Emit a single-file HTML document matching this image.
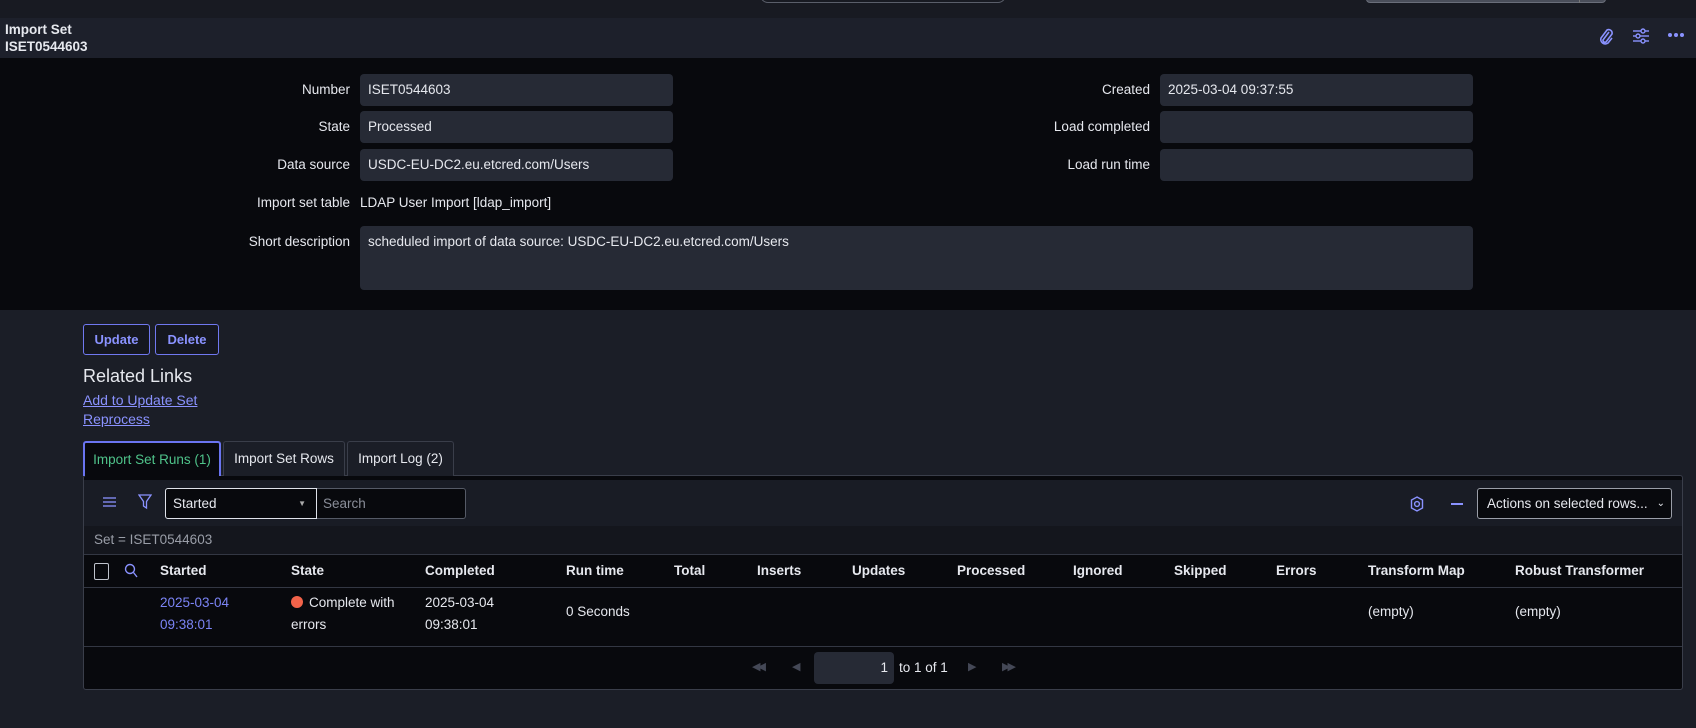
<!DOCTYPE html>
<html><head><meta charset="utf-8"><style>
*{box-sizing:border-box;margin:0;padding:0}
body{width:1696px;height:728px;background:#1b1e27;font-family:"Liberation Sans",sans-serif;color:#e6e8ee;font-size:13.5px;position:relative;overflow:hidden}
.a{position:absolute}
.top{left:0;top:0;width:1696px;height:18px;background:#181a22}
.hdr{left:0;top:18px;width:1696px;height:40px;background:#1d202b}
.form{left:0;top:58px;width:1696px;height:252px;background:#08090d}
.lbl{text-align:right;width:300px;font-size:13.5px;line-height:32px}
.fld{background:#262a35;border-radius:4px;height:32px;line-height:32px;padding-left:8px;font-size:13.5px}
.btn{border:1px solid #7078f0;color:#8a92ff;border-radius:3px;font-weight:bold;font-size:13px;height:31px;line-height:29px;text-align:center;background:#15171f}
.lnk{color:#8a92ff;text-decoration:underline;font-size:14px}
.tab{top:441px;height:35px;border:1px solid #3a3e4a;border-bottom:none;border-radius:3px 3px 0 0;line-height:33px;text-align:center;font-size:13.5px;background:#1b1e27}
.th{top:555px;line-height:32px;font-weight:bold;font-size:13.5px}
.td{font-size:13.5px;line-height:22px}
</style></head><body>
<div class="a top"></div>
<div class="a" style="left:760px;top:-6px;width:246px;height:9px;border:1px solid #5a5e6a;border-radius:0 0 8px 8px"></div>
<div class="a" style="left:1366px;top:-6px;width:240px;height:9px;border:1px solid #6a6e7a;background:#4a4e5a;border-radius:0 0 4px 4px"></div>
<div class="a" style="left:1579px;top:0;width:1px;height:3px;background:#777"></div>
<div class="a hdr"></div>
<div class="a" style="left:5px;top:21px;font-weight:bold;font-size:13.5px;line-height:17px">Import Set<br>ISET0544603</div>
<svg class="a" style="left:1597px;top:27px" width="18" height="20" viewBox="0 0 18 20"><path d="M12 5 L6 13 a2 2 0 0 0 3 2 L15 7 a3.5 3.5 0 0 0 -5 -4 L4 11 a4.5 4.5 0 0 0 7 5 L15 11" fill="none" stroke="#8a92ff" stroke-width="1.6"/></svg>
<svg class="a" style="left:1632px;top:28px" width="18" height="16" viewBox="0 0 18 16"><g stroke="#8a92ff" stroke-width="1.4" fill="#1d202b"><line x1="1" y1="3" x2="17" y2="3"/><line x1="1" y1="8" x2="17" y2="8"/><line x1="1" y1="13" x2="17" y2="13"/><circle cx="11" cy="3" r="2"/><circle cx="6" cy="8" r="2"/><circle cx="11" cy="13" r="2"/></g></svg>
<div class="a" style="left:1668px;top:33px;width:16px;height:4px;display:flex;justify-content:space-between"><i style="width:4px;height:4px;background:#8a92ff;border-radius:2px"></i><i style="width:4px;height:4px;background:#8a92ff;border-radius:2px"></i><i style="width:4px;height:4px;background:#8a92ff;border-radius:2px"></i></div>
<div class="a form"></div>
<div class="a lbl" style="left:50px;top:74px">Number</div><div class="a fld" style="left:360px;top:74px;width:313px">ISET0544603</div>
<div class="a lbl" style="left:50px;top:111px">State</div><div class="a fld" style="left:360px;top:111px;width:313px">Processed</div>
<div class="a lbl" style="left:50px;top:149px">Data source</div><div class="a fld" style="left:360px;top:149px;width:313px">USDC-EU-DC2.eu.etcred.com/Users</div>
<div class="a lbl" style="left:50px;top:187px">Import set table</div><div class="a" style="left:360px;top:187px;line-height:32px">LDAP User Import [ldap_import]</div>
<div class="a lbl" style="left:50px;top:226px">Short description</div><div class="a fld" style="left:360px;top:226px;width:1113px;height:64px">scheduled import of data source: USDC-EU-DC2.eu.etcred.com/Users</div>
<div class="a lbl" style="left:850px;top:74px">Created</div><div class="a fld" style="left:1160px;top:74px;width:313px">2025-03-04 09:37:55</div>
<div class="a lbl" style="left:850px;top:111px">Load completed</div><div class="a fld" style="left:1160px;top:111px;width:313px"></div>
<div class="a lbl" style="left:850px;top:149px">Load run time</div><div class="a fld" style="left:1160px;top:149px;width:313px"></div>
<div class="a btn" style="left:83px;top:324px;width:67px">Update</div>
<div class="a btn" style="left:155px;top:324px;width:64px">Delete</div>
<div class="a" style="left:83px;top:366px;font-size:18px">Related Links</div>
<div class="a lnk" style="left:83px;top:392px">Add to Update Set</div>
<div class="a lnk" style="left:83px;top:411px">Reprocess</div>
<div class="a" style="left:83px;top:475px;width:1600px;height:215px;border:1px solid #3a3e4a;border-radius:3px;background:#08090d"></div>
<div class="a tab" style="left:83px;width:138px;color:#4fc38a;border:2px solid #6a74f0;border-bottom:none;background:#08090d">Import Set Runs (1)</div>
<div class="a tab" style="left:223px;width:122px">Import Set Rows</div>
<div class="a tab" style="left:347px;width:107px">Import Log (2)</div>
<div class="a" style="left:84px;top:480px;width:1598px;height:46px;background:#191c25"></div>
<div class="a" style="left:84px;top:526px;width:1598px;height:29px;background:#14161d;border-bottom:1px solid #333743"></div>
<svg class="a" style="left:103px;top:496px" width="13" height="12"><g stroke="#8a92ff" stroke-width="1.3"><line x1="0" y1="2" x2="13" y2="2"/><line x1="0" y1="6" x2="13" y2="6"/><line x1="0" y1="10" x2="13" y2="10"/></g></svg>
<svg class="a" style="left:138px;top:494px" width="14" height="16"><path d="M1 1H13L8.5 7.5V14L5.5 12V7.5Z" fill="none" stroke="#8a92ff" stroke-width="1.3"/></svg>
<div class="a" style="left:165px;top:488px;width:152px;height:31px;border:1px solid #dfe2ea;border-radius:3px 0 0 3px;background:#08090d;line-height:29px;padding-left:7px">Started<span style="position:absolute;right:10px;font-size:8px;color:#aaa">▼</span></div>
<div class="a" style="left:317px;top:488px;width:149px;height:31px;border:1px solid #555a66;border-left:none;border-radius:0 3px 3px 0;background:#08090d;line-height:29px;padding-left:6px;color:#8a8e99">Search</div>
<svg class="a" style="left:1410px;top:496px" width="14" height="16" viewBox="0 0 14 16"><path d="M7 1 L12.5 4 V12 L7 15 L1.5 12 V4Z" fill="none" stroke="#8a92ff" stroke-width="1.4"/><circle cx="7" cy="8" r="2.4" fill="none" stroke="#8a92ff" stroke-width="1.4"/></svg>
<div class="a" style="left:1451px;top:503px;width:12px;height:1.5px;background:#8a92ff"></div>
<div class="a" style="left:1477px;top:488px;width:195px;height:31px;border:1px solid #9a9ea8;border-radius:3px;background:#08090d;line-height:29px;padding-left:9px">Actions on selected rows...<span style="position:absolute;right:6px;font-size:10px">⌄</span></div>
<div class="a" style="left:94px;top:532px;color:#9a9ea8">Set = ISET0544603</div>
<div class="a" style="left:84px;top:587px;width:1598px;height:1px;background:#333743"></div>
<div class="a" style="left:84px;top:646px;width:1598px;height:1px;background:#333743"></div>
<div class="a" style="left:94px;top:563px;width:15px;height:17px;border:1.5px solid #bfc3cc;border-radius:2px"></div>
<svg class="a" style="left:124px;top:563px" width="15" height="16"><circle cx="6" cy="6" r="4.5" fill="none" stroke="#8a92ff" stroke-width="1.4"/><line x1="9.5" y1="9.5" x2="13" y2="14" stroke="#8a92ff" stroke-width="1.4"/></svg>
<div class="a th" style="left:160px">Started</div><div class="a th" style="left:291px">State</div><div class="a th" style="left:425px">Completed</div><div class="a th" style="left:566px">Run time</div><div class="a th" style="left:674px">Total</div><div class="a th" style="left:757px">Inserts</div><div class="a th" style="left:852px">Updates</div><div class="a th" style="left:957px">Processed</div><div class="a th" style="left:1073px">Ignored</div><div class="a th" style="left:1174px">Skipped</div><div class="a th" style="left:1276px">Errors</div><div class="a th" style="left:1368px">Transform Map</div><div class="a th" style="left:1515px">Robust Transformer</div>
<div class="a td" style="left:160px;top:592px;color:#7b84f5">2025-03-04<br>09:38:01</div>
<div class="a td" style="left:291px;top:592px"><span style="display:inline-block;width:12px;height:12px;border-radius:6px;background:#f2634a;margin-right:6px;vertical-align:-1px"></span>Complete with<br>errors</div>
<div class="a td" style="left:425px;top:592px">2025-03-04<br>09:38:01</div>
<div class="a td" style="left:566px;top:601px">0 Seconds</div>
<div class="a td" style="left:1368px;top:601px">(empty)</div>
<div class="a td" style="left:1515px;top:601px">(empty)</div>
<div class="a" style="left:752px;top:660px;color:#444856;font-size:11px;letter-spacing:-3px">◀◀</div>
<div class="a" style="left:792px;top:660px;color:#444856;font-size:11px">◀</div>
<div class="a" style="left:814px;top:652px;width:80px;height:32px;background:#262a35;border-radius:4px;text-align:right;padding-right:6px;line-height:32px">1</div>
<div class="a" style="left:899px;top:652px;line-height:32px">to 1 of 1</div>
<div class="a" style="left:968px;top:660px;color:#444856;font-size:11px">▶</div>
<div class="a" style="left:1002px;top:660px;color:#444856;font-size:11px;letter-spacing:-3px">▶▶</div>
</body></html>
